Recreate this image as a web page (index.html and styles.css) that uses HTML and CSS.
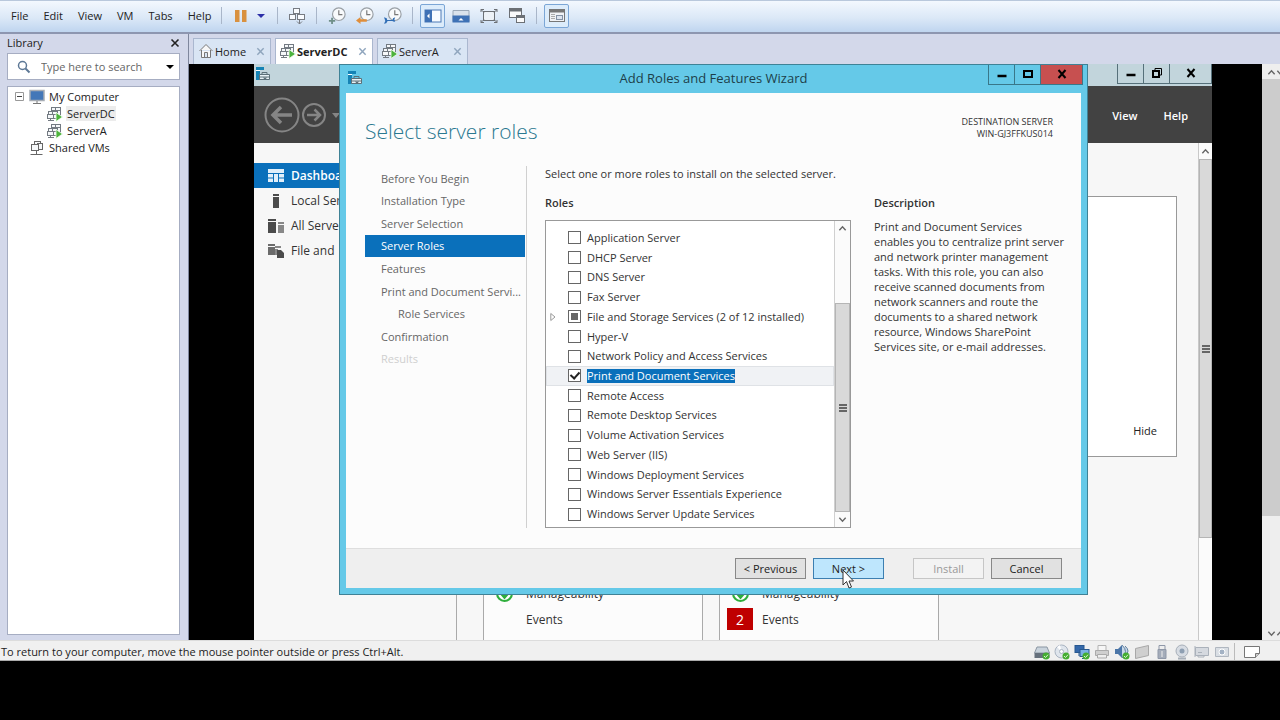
FILE: index.html
```html
<!DOCTYPE html>
<html lang="en">
<head>
<meta charset="utf-8">
<title>ServerDC - Workstation</title>
<link rel="stylesheet" href="styles.css">
</head>
<body>
<svg class="defs" aria-hidden="true">
  <symbol id="vm" viewBox="0 0 16 16"><g fill="#f6f8fa" stroke="#737a82"><rect x="4.500" y="1.500" width="9" height="8"/><path d="M8.500 1.500v3M4.500 4.500h9" fill="none"/><rect x="1.500" y="5.500" width="9" height="7"/><path d="M5.500 5.500v3h5" fill="none"/><rect x="0.500" y="8.500" width="6" height="4"/><path d="M3.500 12.500v2M1 14.500h6"/></g></symbol>
  <symbol id="vm-on" viewBox="0 0 16 16"><use href="#vm"/><path d="M9 6.500l6.500 4.500L9 15.500z" fill="#4db33d" stroke="#f4fff0" stroke-width=".8"/></symbol>
  <symbol id="shared" viewBox="0 0 16 16"><g fill="#f6f8fa" stroke="#666"><rect x="5.500" y="1.500" width="6" height="6"/><rect x="8.500" y="3.500" width="5" height="6"/><rect x="2.500" y="4.500" width="7" height="6"/><path d="M7.500 10.500v4M1.500 14.500h12"/></g></symbol>
  <symbol id="clock" viewBox="0 0 20 20"><circle cx="12" cy="8" r="7" fill="#f8fafc" stroke="#9aa0a6" stroke-width="1.300"/><path d="M12 3.500V8.500h4" fill="none" stroke="#777" stroke-width="1.300"/></symbol>
  <symbol id="server-mgr" viewBox="0 0 16 16"><path d="M1 1h8v3H5v10H1z" fill="#1583b5"/><path d="M1 4.500h4" stroke="#fff"/><path d="M4.500 8.500h10v5h-10z" fill="#e8f2f6" stroke="#5c7079"/><path d="M7 8V6.500h5V8M5 11h10M9 11v1.500h2V11" fill="none" stroke="#5c7079"/></symbol>
  <symbol id="x" viewBox="0 0 10 10"><path d="M1.500 1.500l7 7M8.500 1.500l-7 7" fill="none" stroke="currentColor" stroke-width="1.600"/></symbol>
  <symbol id="up" viewBox="0 0 10 10"><path d="M1.500 7L5 3l3.500 4" fill="none" stroke="currentColor" stroke-width="1.500"/></symbol>
  <symbol id="down" viewBox="0 0 10 10"><path d="M1.500 3L5 7l3.500-4" fill="none" stroke="currentColor" stroke-width="1.500"/></symbol>
  <symbol id="ok" viewBox="0 0 16 16"><circle cx="8" cy="8" r="7" fill="#fff" stroke="#2fae3c" stroke-width="2"/><path d="M8 12V5M5 8.500L8 12l3-3.500" fill="none" stroke="#2fae3c" stroke-width="2"/></symbol>
  <symbol id="badge" viewBox="0 0 8 8"><circle cx="4" cy="4" r="3.500" fill="#45ad32"/><path d="M2 4l1.500 1.500L6 2.700" fill="none" stroke="#d8f5cc"/></symbol>
</svg>

<div class="app">
  <header class="toolbar">
    <nav class="menu">
      <button>File</button><button>Edit</button><button>View</button><button>VM</button><button>Tabs</button><button>Help</button>
    </nav>
    <span class="sep"></span>
    <button class="tool pause" aria-label="Suspend"><svg viewBox="0 0 14 14"><path d="M1 1h4.500v12H1zM8 1h4.500v12H8z" fill="#d9913f"/></svg></button>
    <button class="tool caret" aria-label="Power options"><svg viewBox="0 0 8 8"><path d="M0 2h8L4 6z" fill="#2c2fa8"/></svg></button>
    <span class="sep"></span>
    <button class="tool" aria-label="Send Ctrl+Alt+Del"><svg viewBox="0 0 18 18"><g fill="#fafcff" stroke="#777b82"><rect x="5.500" y="1.500" width="6" height="5"/><rect x="1.500" y="7.500" width="6" height="5"/><rect x="9.500" y="7.500" width="7" height="5"/><path d="M11.500 12v5M9 14.500l2.500 2.500 2.500-2.500" fill="none"/></g></svg></button>
    <span class="sep"></span>
    <button class="tool" aria-label="Take snapshot"><svg viewBox="0 0 20 20"><use href="#clock"/><path d="M4.500 12v7M1 15.500h7" stroke="#6f8f88" stroke-width="2"/></svg></button>
    <button class="tool" aria-label="Revert snapshot"><svg viewBox="0 0 20 20"><use href="#clock"/><path d="M0 15l5-4v2.500h7v3H5V19z" fill="#e08e3a"/></svg></button>
    <button class="tool" aria-label="Manage snapshots"><svg viewBox="0 0 20 20"><use href="#clock"/><path d="M0 11.500l3 1 .5 2h6l.5-2 2.500-1-1 2.500 1 2.500-2.500-.5-.5-.5H4l-1.500 2.500L0 18.500l1.500-3z" fill="#2f6db5"/></svg></button>
    <span class="sep"></span>
    <button class="tool on" aria-label="Show library"><svg viewBox="0 0 18 18"><rect x="1" y="3" width="16" height="12" fill="#f7fbff" stroke="#4c79b5"/><path d="M1 3h7v12H1z" fill="#3e71b5"/><path d="M5.500 6.500v5L3 9z" fill="#fff"/></svg></button>
    <button class="tool" aria-label="Show thumbnail bar"><svg viewBox="0 0 18 18"><path d="M1 3.500h16v11H1z" fill="#d9e2ec" stroke="#9aa8b8"/><path d="M.5 8.500h17v7H.5z" fill="#3e71b5"/><path d="M6.500 13.500h5L9 11z" fill="#fff"/></svg></button>
    <button class="tool" aria-label="Full screen"><svg viewBox="0 0 18 18"><rect x="3.500" y="4.500" width="11" height="9" fill="#edf2f7" stroke="#6c7075"/><path d="M1 5V2.500h3M14 2.500h3V5M17 13v2.500h-3M4 15.500H1V13M1 2.500l3 3M17 2.500l-3 3M1 15.500l3-3M17 15.500l-3-3" fill="none" stroke="#6c7075"/></svg></button>
    <button class="tool" aria-label="Unity"><svg viewBox="0 0 18 18"><g fill="#fafafa" stroke="#6c7075"><rect x="1.500" y="1.500" width="12" height="9"/><path d="M1.500 3h12" stroke-width="3"/><rect x="8.500" y="8.500" width="8" height="7"/><path d="M8.500 9.500h8" stroke-width="3"/></g></svg></button>
    <span class="sep"></span>
    <button class="tool on" aria-label="Console view"><svg viewBox="0 0 18 18"><rect x="1.500" y="2.500" width="15" height="12" fill="#f0f2f5" stroke="#777"/><path d="M1.500 4h15" stroke="#777" stroke-width="3"/><rect x="8.500" y="8.500" width="6" height="4" fill="#dde4ee" stroke="#8492a5"/><path d="M3 7.500h4M3 9.500h4M3 11.500h4" stroke="#aaa"/></svg></button>
  </header>

  <div class="main">
    <aside class="library">
      <div class="library-head"><h2>Library</h2><button aria-label="Close library"><svg viewBox="0 0 10 10"><use href="#x"/></svg></button></div>
      <div class="search">
        <svg class="glass" viewBox="0 0 16 16"><circle cx="6.500" cy="6.500" r="4" fill="none" stroke="#5d7896" stroke-width="1.500"/><path d="M9.500 9.500l4 4" stroke="#5d7896" stroke-width="2"/></svg>
        <input type="text" placeholder="Type here to search" aria-label="Type here to search">
        <button aria-label="Search filter"><svg viewBox="0 0 8 8"><path d="M0 2h8L4 6z"/></svg></button>
      </div>
      <ul class="tree">
        <li><svg class="expander" viewBox="0 0 9 9"><path d="M.5.5h8v8h-8z" fill="#fff" stroke="#999"/><path d="M2 4.500h5" stroke="#444"/></svg><svg viewBox="0 0 16 16"><rect x="1" y="1.500" width="14" height="10" fill="#4377b8" stroke="#a7adb5" stroke-width="1.500"/><path d="M8 12v2.500M4 14.500h8" stroke="#777"/></svg><span>My Computer</span></li>
        <li class="child"><svg viewBox="0 0 16 16"><use href="#vm-on"/></svg><span class="current">ServerDC</span></li>
        <li class="child"><svg viewBox="0 0 16 16"><use href="#vm-on"/></svg><span>ServerA</span></li>
        <li class="root"><svg viewBox="0 0 16 16"><use href="#shared"/></svg><span>Shared VMs</span></li>
      </ul>
    </aside>

    <section class="workspace">
      <div class="tabs">
        <div class="tab"><svg class="tab-icon" viewBox="0 0 16 16"><path d="M1.500 8L8 1.500 14.500 8M3.500 7v7.500h9V7M6.500 14V9.500h3V14" fill="#f7f7f7" stroke="#777"/></svg><span>Home</span><button aria-label="Close Home"><svg viewBox="0 0 10 10"><use href="#x"/></svg></button></div>
        <div class="tab active"><svg class="tab-icon" viewBox="0 0 16 16"><use href="#vm-on"/></svg><span>ServerDC</span><button aria-label="Close ServerDC"><svg viewBox="0 0 10 10"><use href="#x"/></svg></button></div>
        <div class="tab"><svg class="tab-icon" viewBox="0 0 16 16"><use href="#vm-on"/></svg><span>ServerA</span><button aria-label="Close ServerA"><svg viewBox="0 0 10 10"><use href="#x"/></svg></button></div>
      </div>

      <div class="console">
        <div class="desktop">
          <div class="manager">
            <div class="manager-title">
              <svg class="app-icon" viewBox="0 0 16 16"><use href="#server-mgr"/></svg>
              <div class="winbtns">
                <button aria-label="Minimize"><svg viewBox="0 0 12 12"><path d="M1.500 8h9" stroke="#000" stroke-width="2.500"/></svg></button>
                <button aria-label="Restore"><svg viewBox="0 0 12 12"><path d="M4 3.500V1.500h6.500V8h-2" fill="none" stroke="#000"/><rect x="2" y="4" width="6" height="6" fill="none" stroke="#000" stroke-width="2"/></svg></button>
                <button class="wide" aria-label="Close"><svg viewBox="0 0 12 12"><path d="M2.500 2l7 8M9.500 2l-7 8" stroke="#000" stroke-width="2"/></svg></button>
              </div>
            </div>
            <div class="manager-bar">
              <svg class="history" viewBox="0 0 90 40"><g fill="none" stroke="#858585" stroke-width="2"><circle cx="18" cy="20" r="16.500"/><circle cx="50" cy="20" r="11"/><path d="M28 20H10M17 12l-8 8 8 8" stroke-width="3.500"/><path d="M43 20h12M50.500 14.500L56 20l-5.500 5.500" stroke-width="2.500"/></g><path d="M68 18h8l-4 5z" fill="#858585"/></svg>
              <nav class="manager-menu"><button>Tools</button><button>View</button><button>Help</button></nav>
            </div>
            <div class="manager-body">
              <nav class="manager-nav">
                <a href="#" class="current"><svg viewBox="0 0 16 16"><path d="M0 1h16v4H0zM0 6h5v3.500H0zM6 6h4v8H6zM11 6h5v3.500h-5zM0 10.500h5V14H0zM11 10.500h5V14h-5z" fill="#e1effa"/></svg>Dashboard</a>
                <a href="#"><svg viewBox="0 0 16 16"><path d="M5 1h6v2H5zM5 4h6v11H5z" fill="#4b4b4b"/></svg>Local Server</a>
                <a href="#"><svg viewBox="0 0 16 16"><path d="M0 1h8v2H0zM0 4h8v11H0z" fill="#4b4b4b"/><path d="M10 4h6v2h-6zM10 7h6v8h-6z" fill="#888"/></svg>All Servers</a>
                <a href="#"><svg viewBox="0 0 16 16"><path d="M0 1h7v2H0zM0 4h7v8H0z" fill="#6b6b6b"/><path d="M7 3h6v2H7zM7 6h3v6H7z" fill="#888"/><path d="M9 7h4l3 3v5H9z" fill="#4b4b4b"/></svg>File and</a>
              </nav>
              <div class="manager-content">
                <div class="welcome"><button>Hide</button></div>
                <div class="tiles">
                  <div class="tile narrow"></div>
                  <div class="tile"><div class="tile-row"><span class="mark"><svg viewBox="0 0 16 16"><use href="#ok"/></svg></span>Manageability</div><div class="tile-row"><span class="mark"></span>Events</div></div>
                  <div class="tile"><div class="tile-row"><span class="mark"><svg viewBox="0 0 16 16"><use href="#ok"/></svg></span>Manageability</div><div class="tile-row"><span class="mark alert">2</span>Events</div></div>
                </div>
              </div>
              <div class="scroll guest"><span class="arrow"><svg viewBox="0 0 10 10"><use href="#up"/></svg></span><span class="thumb"><i></i></span></div>
            </div>
          </div>

          <section class="wizard">
            <div class="wizard-title">
              <svg class="app-icon" viewBox="0 0 16 16"><use href="#server-mgr"/></svg>
              <h1>Add Roles and Features Wizard</h1>
              <div class="winbtns">
                <button aria-label="Minimize"><svg viewBox="0 0 12 12"><path d="M1.500 8h9" stroke="#000" stroke-width="2.500"/></svg></button>
                <button aria-label="Maximize"><svg viewBox="0 0 12 12"><rect x="2" y="3" width="8" height="6" fill="none" stroke="#000" stroke-width="2"/></svg></button>
                <button class="wide close" aria-label="Close"><svg viewBox="0 0 12 12"><path d="M2.500 2l7 8M9.500 2l-7 8" stroke="#000" stroke-width="2"/></svg></button>
              </div>
            </div>
            <div class="wizard-page">
              <div class="wizard-head">
                <h2>Select server roles</h2>
                <p>DESTINATION SERVER<br>WIN-GJ3FFKUS014</p>
              </div>
              <div class="wizard-body">
                <nav class="steps">
                  <a href="#">Before You Begin</a><a href="#">Installation Type</a><a href="#">Server Selection</a><a href="#" class="current">Server Roles</a><a href="#">Features</a><a href="#">Print and Document Servi...</a><a href="#" class="sub">Role Services</a><a href="#">Confirmation</a><a class="off">Results</a>
                </nav>
                <div class="roles-pane">
                  <p class="intro">Select one or more roles to install on the selected server.</p>
                  <h3>Roles</h3>
                  <div class="listbox">
                    <div class="roles">
                      <label><input type="checkbox"><span>Application Server</span></label>
                      <label><input type="checkbox"><span>DHCP Server</span></label>
                      <label><input type="checkbox"><span>DNS Server</span></label>
                      <label><input type="checkbox"><span>Fax Server</span></label>
                      <label><svg class="expand" viewBox="0 0 6 10"><path d="M.8 1.500L5 5 .8 8.500z" fill="#fff" stroke="#999"/></svg><input type="checkbox" class="partial"><span>File and Storage Services (2 of 12 installed)</span></label>
                      <label><input type="checkbox"><span>Hyper-V</span></label>
                      <label><input type="checkbox"><span>Network Policy and Access Services</span></label>
                      <label class="selected"><input type="checkbox" checked><span>Print and Document Services</span></label>
                      <label><input type="checkbox"><span>Remote Access</span></label>
                      <label><input type="checkbox"><span>Remote Desktop Services</span></label>
                      <label><input type="checkbox"><span>Volume Activation Services</span></label>
                      <label><input type="checkbox"><span>Web Server (IIS)</span></label>
                      <label><input type="checkbox"><span>Windows Deployment Services</span></label>
                      <label><input type="checkbox"><span>Windows Server Essentials Experience</span></label>
                      <label><input type="checkbox"><span>Windows Server Update Services</span></label>
                    </div>
                    <div class="scroll list"><span class="arrow"><svg viewBox="0 0 10 10"><use href="#up"/></svg></span><span class="thumb"><i></i></span><span class="arrow"><svg viewBox="0 0 10 10"><use href="#down"/></svg></span></div>
                  </div>
                </div>
                <div class="description">
                  <h3>Description</h3>
                  <p>Print and Document Services<br>enables you to centralize print server<br>and network printer management<br>tasks. With this role, you can also<br>receive scanned documents from<br>network scanners and route the<br>documents to a shared network<br>resource, Windows SharePoint<br>Services site, or e-mail addresses.</p>
                </div>
              </div>
              <footer class="wizard-foot">
                <button>&lt; Previous</button><button class="hot">Next &gt;</button><button class="apart" disabled>Install</button><button>Cancel</button>
              </footer>
            </div>
            <svg class="pointer" viewBox="0 0 12 20"><path d="M1 1v15l3.500-3.500L7 19l2.500-1-2.500-6H11.500z" fill="#fff" stroke="#333"/></svg>
          </section>
        </div>
        <div class="scroll host"><span class="arrow"><svg viewBox="0 0 10 10"><use href="#up"/></svg><svg viewBox="0 0 10 10"><use href="#down"/></svg></span><span class="thumb"></span><span class="arrow last"><svg viewBox="0 0 10 10"><use href="#down"/></svg><svg viewBox="0 0 10 10"><use href="#up"/></svg></span></div>
      </div>
    </section>
  </div>

  <footer class="status">
    <p>To return to your computer, move the mouse pointer outside or press Ctrl+Alt.</p>
    <div class="devices">
      <svg viewBox="0 0 16 16"><path d="M3 3h10l2.500 6H.5z" fill="#c9d3dc" stroke="#8b97a3"/><path d="M.5 9h15v5H.5z" fill="#66717d"/><use href="#badge" x="8" y="8" width="8" height="8"/></svg>
      <svg viewBox="0 0 16 16"><circle cx="7.500" cy="7.500" r="6.500" fill="#dfe5ec" stroke="#a9b4c2"/><path d="M7.500 7.500L3 3l3-2z" fill="#fff"/><circle cx="7.500" cy="7.500" r="2" fill="#fff" stroke="#a9b4c2"/><use href="#badge" x="8" y="8" width="8" height="8"/></svg>
      <svg viewBox="0 0 16 16"><g stroke="#28588f"><rect x="1" y="1.500" width="9" height="7" fill="#3568aa"/><rect x="6" y="5.500" width="9" height="7" fill="#79b1e5"/><path d="M5 9v3M8 14.500h5"/></g><use href="#badge" x="8" y="8" width="8" height="8"/></svg>
      <svg viewBox="0 0 16 16"><path d="M4 1.500h8v5H4z" fill="#f6f6f6" stroke="#b3b3b3"/><path d="M1.500 6.500h13v5h-13z" fill="#cfcfcf" stroke="#aaa"/><path d="M3.500 10.500h9v3.500h-9z" fill="#eee" stroke="#aaa"/></svg>
      <svg viewBox="0 0 16 16"><path d="M1 5h3l4-4v13l-4-4H1z" fill="#4c76a8"/><path d="M8 1q7 6.500 0 13M11 2q6 5 0 10" fill="#c8d8e8" stroke="#5f7f9f"/><use href="#badge" x="8" y="8" width="8" height="8"/></svg>
      <svg viewBox="0 0 16 16"><path d="M1.500 4.500l13-3v10l-13 3z" fill="#cfcfcf" stroke="#a8a8a8"/></svg>
      <svg viewBox="0 0 16 16"><path d="M5 1.500h6v4H5z" fill="#eee" stroke="#8f98a8"/><path d="M4 5.500h8v9H4z" fill="#a4acba" stroke="#8f98a8"/><path d="M8 7v6" stroke="#eee"/></svg>
      <svg viewBox="0 0 16 16"><circle cx="8" cy="7" r="6" fill="#d7dce3" stroke="#a7afb9"/><circle cx="8" cy="7" r="2.500" fill="#8e9fb2"/><path d="M4 14.500h8" stroke="#a7afb9" stroke-width="2"/></svg>
      <svg viewBox="0 0 16 16"><path d="M1 2v11M1.500 3.500h13v8h-13z" fill="#d5d9df" stroke="#aab1ba"/><path d="M4 8.500h4M4 11v2h6v-2" fill="none" stroke="#aab1ba"/></svg>
      <svg viewBox="0 0 16 16"><path d="M1.500 3.500h13v9h-13z" fill="#d9dee4" stroke="#b0b7c0"/><circle cx="8" cy="8" r="3" fill="#a3b2c4" stroke="#fff"/></svg>
      <span class="sep"></span>
      <svg viewBox="0 0 16 16"><path d="M.5 2.500h15v7l-4 4H.5z" fill="#fff" stroke="#777"/><path d="M15.500 9.500h-4v4" fill="#ccc" stroke="#777"/></svg>
    </div>
  </footer>
</div>
</body>
</html>
```
FILE: styles.css
```css
* { box-sizing: border-box; }
body { margin: 0; background: #000; color: #222; font-family: "Open Sans", "Noto Sans", sans-serif; font-size: 11px; line-height: 15px; }
h1, h2, h3, p, ul { margin: 0; padding: 0; font-weight: 400; font-size: inherit; }
button { margin: 0; padding: 0; border: 0; background: none; font: inherit; color: inherit; }
a { color: inherit; text-decoration: none; }
svg { display: block; flex: none; }
.defs { position: absolute; width: 0; height: 0; }

.app { display: flex; flex-direction: column; height: calc(100vh - 59px); background: #d3d8ea; overflow: hidden; }

/* Menu and toolbar */
.toolbar { display: flex; align-items: center; height: 34px; flex: none; padding: 0 0 2px 11px; background: linear-gradient(#f3f8fe, #dbe8f7 55%, #bfd5ef); border-top: 1px solid #b9c8dc; border-bottom: 2px solid #8d96b0; }
.menu { display: flex; gap: 15px; width: 210px; }
.sep { width: 1px; height: 17px; background: #a9b6c9; }
.tool { display: flex; align-items: center; justify-content: center; width: 28px; height: 26px; }
.tool svg { width: 18px; height: 18px; }
.pause { width: 24px; margin-left: 7px; }
.pause svg { width: 14px; height: 14px; }
.caret { width: 16px; }
.caret svg { width: 8px; height: 8px; }
.tool + .sep { margin: 0 5px; }
.caret + .sep { margin: 0 4px 0 8px; }
.sep + .tool:not(.pause, .on) { margin-left: 1px; }
.tool.on { width: 25px; height: 24px; border: 1px solid #7ba6d6; border-radius: 2px; background: #dcecfb; margin: 0 2px; }

.main { display: flex; flex: 1; min-height: 0; }

/* Library */
.library { display: flex; flex-direction: column; width: 188px; flex: none; padding: 0 8px 5px 7px; }
.library-head { display: flex; justify-content: space-between; align-items: center; height: 19px; padding-bottom: 2px; }
.library-head svg { width: 10px; height: 10px; }
.search { display: flex; align-items: center; height: 27px; background: #fff; border: 1px solid #a6adc2; padding: 0 5px 0 8px; }
.glass { width: 16px; height: 16px; }
.search input { flex: 1; min-width: 0; border: 0; outline: 0; padding: 0 0 0 9px; font: inherit; background: none; }
.search input::placeholder { color: #666; opacity: 1; }
.search button svg { width: 8px; height: 8px; }
.tree { flex: 1; margin-top: 6px; padding: 1px 7px; background: #fff; border: 1px solid #a6adc2; list-style: none; }
.tree li { display: flex; align-items: center; gap: 3px; height: 17px; }
.tree li svg { width: 16px; height: 16px; }
.tree .expander { width: 9px; height: 9px; margin-right: 2px; }
.tree span { padding: 0 1px; }
.tree .child { padding-left: 32px; }
.tree .root { padding-left: 14px; }
.tree .current { background: #ececec; }

/* Tabs */
.workspace { display: flex; flex-direction: column; flex: 1; min-width: 0; border-left: 1px solid #7f879d; }
.tabs { display: flex; height: 30px; flex: none; padding: 4px 0 0 4px; gap: 4px; }
.tab { display: flex; align-items: center; width: 78px; padding: 0 5px 1px 4px; background: #d9e5f4; border: 1px solid #aab7cf; border-bottom: 0; }
.tab.active { width: 98px; background: #fff; font-weight: 700; }
.tab:last-child { width: 91px; }
.tab-icon { width: 16px; height: 16px; margin-right: 1px; }
.tab span { flex: 1; }
.tab button { color: #8fa5bd; }
.tab button svg { width: 9px; height: 9px; }

/* Guest display */
.console { display: flex; flex: 1; min-height: 0; background: #000; }
.desktop { position: relative; display: flex; flex: 1; min-width: 0; padding: 0 50px 0 65px; }
.manager { display: flex; flex-direction: column; flex: 1; min-width: 0; background: #f7f7f7; overflow: hidden; }
.manager-title { display: flex; justify-content: space-between; height: 22px; flex: none; background: #c2d5dc; padding-left: 1px; }
.app-icon { width: 16px; height: 16px; margin-top: 2px; }
.winbtns { display: flex; height: 20px; }
.winbtns button { display: flex; align-items: center; justify-content: center; width: 26px; padding-bottom: 2px; border: 1px solid #56707a; border-top: 0; border-right: 0; }
.winbtns button svg { width: 12px; height: 12px; }
.winbtns button.wide { width: 43px; border-right: 1px solid #56707a; }
.manager-bar { display: flex; align-items: center; justify-content: space-between; height: 57px; flex: none; padding: 0 24px 0 10px; background: #424242; color: #fff; }
.history { width: 90px; height: 40px; }
.manager-menu { display: flex; gap: 26px; padding-top: 2px; font-weight: 600; }
.manager-body { display: flex; flex: 1; min-height: 0; }
.manager-nav { width: 85px; padding-top: 20px; flex: none; font-size: 12px; color: #333; }
.manager-nav a { display: flex; align-items: center; gap: 7px; height: 25px; padding-left: 14px; white-space: nowrap; overflow: hidden; }
.manager-nav svg { width: 16px; height: 16px; }
.manager-nav .current { background: #0a70bb; color: #fff; font-weight: 600; }
.manager-content { flex: 1; min-width: 0; padding: 53px 21px 0 81px; }
.welcome { display: flex; align-items: flex-end; justify-content: flex-end; height: 261px; padding: 18px 19px; background: #fff; border: 1px solid #999; }
.tiles { display: flex; gap: 16px; margin-top: 20px; font-size: 12px; }
.tile { width: 220px; height: 200px; padding: 102px 0 0 7px; border: 1px solid #aaa; background: #fcfcfc; }
.tile.narrow { width: 37px; margin-right: 10px; border-left: 0; background: none; }
.tile-row { display: flex; align-items: center; gap: 9px; height: 26px; color: #333; }
.mark { display: flex; align-items: center; justify-content: center; width: 26px; height: 22px; font-size: 14px; }
.mark svg { width: 17px; height: 17px; }
.alert { background: #bf0000; color: #fff; }

/* Scroll bars */
.scroll { display: flex; flex-direction: column; flex: none; background: #fbfbfb; color: #666; }
.scroll .arrow { display: flex; align-items: center; justify-content: center; height: 15px; }
.scroll .arrow svg { width: 9px; height: 9px; }
.scroll .thumb { display: flex; align-items: center; justify-content: center; background: #d9d9d9; border: 1px solid #b5b5b5; }
.scroll i { width: 8px; height: 8px; background: repeating-linear-gradient(#666 0 2px, #d9d9d9 2px 3px); }
.guest { width: 14px; border-left: 1px solid #c9c9c9; padding-top: 1px; }
.guest .thumb { height: 379px; }
.host { width: 18px; background: #eee; }
.host .thumb { height: 437px; background: #ccc; border: 0; }
.host .arrow { justify-content: flex-start; padding: 2px 0 0 5px; overflow: hidden; }
.host .last { margin-top: auto; }
.list { width: 16px; border-left: 1px solid #d0d0d0; }
.list .thumb { flex: 1; margin-top: 67px; }

/* Wizard window */
.wizard { position: absolute; top: 0; left: 150px; right: 174px; padding: 0 6px 6px; background: #65c9e8; border: 1px solid #3f8296; }
.wizard-title { display: flex; justify-content: space-between; height: 28px; padding-left: 1px; }
.wizard-title .app-icon { margin-top: 5px; }
.wizard-title h1 { padding: 6px 0 0 76px; flex: 1; text-align: center; font-size: 13px; color: #1d3f4a; }
.wizard-title .winbtns { margin-right: -2px; }
.wizard-title .winbtns button { border-color: #397789; }
.wizard-title .close { background: #c75050; }
.wizard-page { display: flex; flex-direction: column; background: #fcfcfc; }
.wizard-head { display: flex; justify-content: space-between; height: 73px; padding: 23px 28px 0 19px; }
.wizard-head h2 { font-size: 21px; line-height: 30px; font-weight: 300; color: #2a7890; }
.wizard-head p { font-size: 9px; line-height: 12px; text-align: right; color: #333; }
.wizard-body { display: flex; padding: 0 16px 20px 19px; }
.steps { display: grid; grid-auto-rows: 1fr; width: 162px; height: 362px; padding: 1px 1px 158px 0; border-right: 1px solid #d0d0d0; flex: none; color: #666; }
.steps a { display: flex; align-items: center; padding-left: 16px; white-space: nowrap; }
.steps .sub { padding-left: 33px; }
.steps .current { background: #0a70bb; color: #fff; }
.steps .off { color: #cfcfcf; }
.roles-pane { display: flex; flex-direction: column; width: 306px; margin-left: 18px; flex: none; }
.intro { height: 29px; color: #333; }
h3 { font-weight: 600; color: #333; }
.listbox { display: flex; flex: 1; margin-top: 10px; border: 1px solid #999; background: #fff; }
.roles { display: grid; grid-auto-rows: 1fr; flex: 1; padding: 7px 0 3px; }
.roles label { position: relative; display: flex; align-items: center; gap: 6px; padding-left: 21px; border: 1px solid transparent; color: #333; line-height: 14px; }
.roles .selected { background: #f0f2f5; border-color: #dfe2e6; }
.selected span { background: #0a70bb; color: #fff; }
.expand { position: absolute; left: 3px; width: 6px; height: 10px; }
input[type="checkbox"] { appearance: none; display: flex; align-items: center; justify-content: center; width: 13px; height: 13px; margin: 0; flex: none; border: 1px solid #666; background: #fff; }
.partial::before { content: ""; width: 7px; height: 7px; background: #666; }
input:checked::before { content: ""; width: 4px; height: 7px; margin-bottom: 2px; border: solid #222; border-width: 0 2px 2px 0; transform: rotate(42deg); }
.description { margin-left: 23px; padding-top: 29px; color: #333; white-space: nowrap; }
.description p { padding-top: 9px; }
.wizard-foot { display: flex; justify-content: flex-end; gap: 7px; height: 40px; padding: 9px 19px 0; background: #efefef; border-top: 1px solid #dedede; }
.wizard-foot button { width: 71px; height: 21px; border: 1px solid #888; background: #e1e1e1; color: #222; }
.wizard-foot .hot { border-color: #3c7fb1; background: #bee6fd; }
.wizard-foot .apart { margin-left: 22px; }
.wizard-foot button:disabled { border-color: #c6c6c6; background: #f3f3f3; color: #999; }
.pointer { position: absolute; right: 233px; bottom: 5px; width: 12px; height: 20px; }

/* Status bar */
.status { display: flex; align-items: center; justify-content: space-between; height: 21px; flex: none; padding: 2px 20px 0 1px; background: #f0f0f0; border-top: 1px solid #dcdcdc; border-bottom: 1px solid #aaa; white-space: nowrap; }
.devices { display: flex; align-items: center; gap: 4px; }
.devices svg { width: 16px; height: 16px; }
.devices .sep { margin: 0 5px 0 0; background: #bbb; }
```
